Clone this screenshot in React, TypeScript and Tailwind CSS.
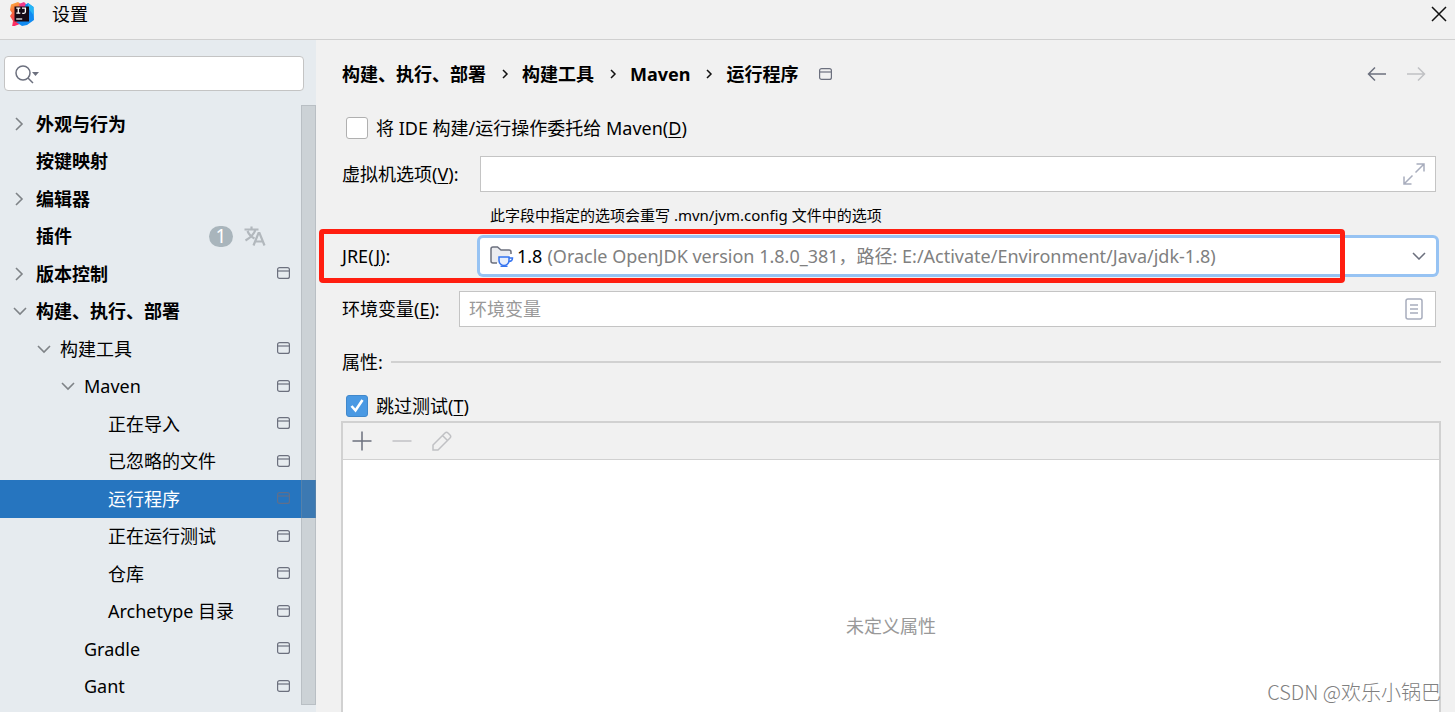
import { useState, type ReactNode } from "react";

const latin = "font-['Noto_Sans','Noto_Sans_CJK_SC',sans-serif]";

type Node = {
  label: string;
  depth: number;
  state?: "open" | "closed";
  bold?: boolean;
  project?: boolean;
  plugin?: boolean;
};

const nodes: Node[] = [
  { label: "外观与行为", depth: 0, state: "closed", bold: true },
  { label: "按键映射", depth: 0, bold: true },
  { label: "编辑器", depth: 0, state: "closed", bold: true },
  { label: "插件", depth: 0, bold: true, plugin: true },
  { label: "版本控制", depth: 0, state: "closed", bold: true, project: true },
  { label: "构建、执行、部署", depth: 0, state: "open", bold: true },
  { label: "构建工具", depth: 1, state: "open", project: true },
  { label: "Maven", depth: 2, state: "open", project: true },
  { label: "正在导入", depth: 3, project: true },
  { label: "已忽略的文件", depth: 3, project: true },
  { label: "运行程序", depth: 3, project: true },
  { label: "正在运行测试", depth: 3, project: true },
  { label: "仓库", depth: 3, project: true },
  { label: "Archetype 目录", depth: 3, project: true },
  { label: "Gradle", depth: 2, project: true },
  { label: "Gant", depth: 2, project: true },
];

const indents = ["pl-3", "pl-9", "pl-[60px]", "pl-[84px]"];

function Logo() {
  return (
    <svg viewBox="0 0 24 24" className="size-6" aria-hidden="true">
      <defs>
        <linearGradient id="warm" x1="0" y1="0" x2="0.3" y2="1">
          <stop offset="0" stopColor="#fdb640" />
          <stop offset="0.45" stopColor="#f9663f" />
          <stop offset="1" stopColor="#fe1f6b" />
        </linearGradient>
      </defs>
      <path d="M1 2.500 8 0l6 4 1 16-13 5 1-6-3-5 2-3-2-3z" fill="url(#warm)" />
      <path d="m9 2 5-2 3 3-6 5z" fill="#f23a8a" />
      <path d="m15 3 3-2 5.500 4 .5 13-7 5-5 1-6-4 12-4z" fill="#118bf2" />
      <path d="m18 1 5.500 4v8l-5.500-7z" fill="#25b5f5" />
      <rect x="4.500" y="4.500" width="14.500" height="15" fill="#160b16" />
      <path d="M6.300 6.200h4M8.300 6.200v5M6.300 11.200h4M12 6.200h3.400v3.600q0 1.500-1.600 1.500h-1.600" stroke="#fff" strokeWidth="1.300" fill="none" />
      <path d="M6.200 17h6" stroke="#fff" strokeWidth="1.200" />
    </svg>
  );
}

function ProjectIcon({ className = "text-[#6c707e]" }: { className?: string }) {
  return (
    <svg viewBox="0 0 13 12" className={`h-3 w-[13px] shrink-0 ${className}`} fill="none" stroke="currentColor" aria-hidden="true">
      <rect x="0.600" y="0.600" width="11.800" height="10.800" rx="2" strokeWidth="1.200" />
      <path d="M1 4h11" strokeWidth="1.200" />
    </svg>
  );
}

function Chevron({ open }: { open: boolean }) {
  return (
    <svg viewBox="0 0 16 16" className="size-4" fill="none" stroke="#7f8387" strokeWidth="1.600" aria-hidden="true">
      <path d={open ? "m2 5 6 6 6-6" : "m4 2 6 6-6 6"} />
    </svg>
  );
}

function TranslateIcon() {
  return (
    <svg viewBox="0 0 22 20" className="h-5 w-[22px]" fill="none" stroke="#b2b8bd" strokeWidth="2.200" aria-hidden="true">
      <path d="M0.500 3.500h14M7.500 0.500v3M11.500 3.500Q9.500 10 1.500 14.500M3.500 5Q5.500 10 10.500 12.500" />
      <path d="m9.500 19.500 5-12.500h1l5 12.500M11.500 15.500h7" />
    </svg>
  );
}

function Mnemonic({ k }: { k: string }) {
  return (
    <span>
      (<span className="underline decoration-1 underline-offset-2">{k}</span>)
    </span>
  );
}

function Check({ label, k, initial }: { label: string; k: string; initial: boolean }) {
  const [on, setOn] = useState(initial);
  return (
    <label className="flex h-6 items-center gap-2 pl-1">
      <span className="grid size-[22px] shrink-0">
        <input
          type="checkbox"
          checked={on}
          onChange={() => setOn(!on)}
          className="col-start-1 row-start-1 appearance-none rounded-[3px] border border-[#b0b0b0] bg-white checked:border-[#4188cb] checked:bg-[#4a99e3]"
        />
        {on && (
          <svg viewBox="0 0 22 22" className="pointer-events-none col-start-1 row-start-1" fill="none" stroke="#fff" strokeWidth="2.600" aria-hidden="true">
            <path d="m5.500 11 4 4.500 7-10.500" />
          </svg>
        )}
      </span>
      <span>
        {label}
        <Mnemonic k={k} />
      </span>
    </label>
  );
}

function TreeRow({ node, selected, onSelect }: { node: Node; selected: boolean; onSelect: () => void }) {
  return (
    <li className="flex flex-1">
      <button
        type="button"
        onClick={onSelect}
        className={`flex flex-1 items-center pr-[26px] text-left ${indents[node.depth]} ${selected ? "bg-[#2675bf] text-white" : ""}`}
      >
        <span className="w-6 shrink-0">{node.state && <Chevron open={node.state === "open"} />}</span>
        <span className={`flex-1 ${node.bold ? "font-bold" : ""}`}>{node.label}</span>
        {node.plugin && (
          <span className="flex items-center gap-[11px] pr-6">
            <span className="flex h-[21px] w-6 items-center justify-center rounded-full bg-[#a9b5bc] text-[19px] text-white">1</span>
            <TranslateIcon />
          </span>
        )}
        {node.project && (
          <span className="pb-px">
            <ProjectIcon className={selected ? "text-[#5f6f8b]" : "text-[#6c707e]"} />
          </span>
        )}
      </button>
    </li>
  );
}

function Sidebar() {
  const [selected, setSelected] = useState("运行程序");
  return (
    <aside className="flex w-[316px] shrink-0 flex-col bg-[#e6ebef]">
      <label className="mx-1 mt-4 mr-3 flex h-[35px] items-center rounded border border-[#c4c4c4] bg-white pl-[9px]">
        <svg viewBox="0 0 26 20" className="h-5 w-[26px]" fill="none" stroke="#6c707e" strokeWidth="1.500" aria-hidden="true">
          <circle cx="9" cy="9" r="7" />
          <path d="m14 14 5 5" />
          <path d="M18 8h7l-3.500 4z" fill="#6c707e" stroke="none" />
        </svg>
        <input type="search" aria-label="搜索" className="min-w-0 flex-1 outline-none" />
      </label>
      <div className="relative mt-[14px] flex">
        <ul className="flex min-h-[600px] flex-1 flex-col">
          {nodes.map((n) => (
            <TreeRow key={n.label} node={n} selected={n.label === selected} onSelect={() => setSelected(n.label)} />
          ))}
        </ul>
        <div className="pointer-events-none absolute inset-y-0 right-0 w-[15px] border border-[#8f969b]/30 bg-[#80868b]/25" />
      </div>
    </aside>
  );
}

function Field({ label, k, id, width, children }: { label: string; k: string; id: string; width: string; children: ReactNode }) {
  return (
    <div className="mr-[5px] flex items-center">
      <label htmlFor={id} className={`shrink-0 ${width}`}>
        {label}
        <Mnemonic k={k} />:
      </label>
      {children}
    </div>
  );
}

function Breadcrumbs() {
  return (
    <div className="flex items-center">
      <nav className="flex flex-1 items-center font-bold">
        {["构建、执行、部署", "构建工具", "Maven", "运行程序"].map((part, i) => (
          <span key={part} className="flex items-center">
            {i > 0 && (
              <svg viewBox="0 0 36 12" className="h-3 w-9" fill="none" stroke="#111" strokeWidth="1.500" aria-hidden="true">
                <path d="m17 2 4 4-4 4" />
              </svg>
            )}
            {part}
          </span>
        ))}
        <span className="pl-[21px]">
          <ProjectIcon />
        </span>
      </nav>
      <div className="flex gap-5 pr-[14px]">
        <button type="button" aria-label="后退" className="text-[#6c707e]">
          <svg viewBox="0 0 20 16" className="h-4 w-5" fill="none" stroke="currentColor" strokeWidth="1.500">
            <path d="M19 8H2M8 1.500 1.500 8 8 14.500" />
          </svg>
        </button>
        <button type="button" aria-label="前进" className="text-[#c0c1c4]">
          <svg viewBox="0 0 20 16" className="h-4 w-5" fill="none" stroke="currentColor" strokeWidth="1.500">
            <path d="M0 8h17M11 1.500 17.500 8 11 14.500" />
          </svg>
        </button>
      </div>
    </div>
  );
}

export default function App() {
  return (
    <div className={`relative flex min-h-screen flex-col bg-[#f1f1f1] text-[18px] leading-6 text-black ${latin}`}>
      <header className="flex h-10 shrink-0 items-start border-b border-[#d0d0d0] pt-[2px] pr-2 pl-[10px]">
        <Logo />
        <h1 className="flex-1 pl-[18px]">设置</h1>
        <button type="button" aria-label="关闭" className="pt-1">
          <svg viewBox="0 0 16 16" className="size-4" fill="none" stroke="#111" strokeWidth="1.500">
            <path d="m1 1 14 14M15 1 1 15" />
          </svg>
        </button>
      </header>
      <div className="flex flex-1">
        <Sidebar />
        <main className="flex min-w-0 flex-1 flex-col pt-[22px] pr-[14px] pl-[26px]">
          <Breadcrumbs />
          <div className="mt-[30px]">
            <Check label="将 IDE 构建/运行操作委托给 Maven" k="D" initial={false} />
          </div>
          <div className="mt-4">
            <Field label="虚拟机选项" k="V" id="vm" width="w-[138px]">
              <div className="flex h-9 flex-1 items-center border border-[#c4c4c4] bg-white pr-[10px] pl-2">
                <input id="vm" type="text" className="min-w-0 flex-1 outline-none" />
                <svg viewBox="0 0 22 22" className="size-[22px]" fill="none" stroke="#a8adbd" strokeWidth="1.500" aria-hidden="true">
                  <path d="M13.500 1H21v7.500M21 1l-8.500 8.500M1 13.500V21h7.500M1 21l8.500-8.500" />
                </svg>
              </div>
            </Field>
          </div>
          <p className="mt-[11px] pl-[148px] text-[15px]">此字段中指定的选项会重写 .mvn/jvm.config 文件中的选项</p>
          <div className="relative mt-[11px]">
            <Field label="JRE" k="J" id="jre" width="w-[138px]">
              <div className="flex h-9 min-w-0 flex-1 items-center rounded-[3px] bg-white pr-[10px] pl-[10px] ring-[3px] ring-[#97c3f3]">
                <svg viewBox="0 0 24 22" className="h-[22px] w-6 shrink-0" fill="none" strokeWidth="1.500" aria-hidden="true">
                  <path d="M7 18H3q-2 0-2-2V4q0-2 2-2h4.500l3.500 3h8q2 0 2 2v2" fill="#ebecf0" stroke="#6c707e" />
                  <path d="M9 12h10v3.500a5 5 0 0 1-10 0z" fill="#e7effd" stroke="#3574f0" />
                  <path d="M19 13h3.500q0 3.500-4 3.500M10.500 21.200h7" stroke="#3574f0" />
                </svg>
                <span className="pl-[3px]">1.8</span>
                <select id="jre" className="min-w-0 flex-1 appearance-none bg-transparent pl-[5px] text-[#808080] outline-none">
                  <option>(Oracle OpenJDK version 1.8.0_381，路径: E:/Activate/Environment/Java/jdk-1.8)</option>
                </select>
                <svg viewBox="0 0 14 8" className="h-2 w-[14px] shrink-0" fill="none" stroke="#6c707e" strokeWidth="1.500" aria-hidden="true">
                  <path d="m1 1 6 6 6-6" />
                </svg>
              </div>
            </Field>
            <div className="pointer-events-none absolute -inset-y-[9px] right-[96px] -left-[23px] rounded border-[5px] border-[#ff1e10]" />
          </div>
          <div className="mt-[17px]">
            <Field label="环境变量" k="E" id="env" width="w-[117px]">
              <div className="flex h-9 flex-1 items-center border border-[#c4c4c4] bg-white pr-3 pl-[9px]">
                <input id="env" type="text" placeholder="环境变量" className="min-w-0 flex-1 outline-none placeholder:text-[#999999]" />
                <svg viewBox="0 0 18 22" className="h-[22px] w-[18px]" fill="none" stroke="#a8adbd" strokeWidth="1.500" aria-hidden="true">
                  <rect x="1" y="1" width="16" height="20" rx="2" />
                  <path d="M5 7h8M5 11h8M5 15h8" />
                </svg>
              </div>
            </Field>
          </div>
          <div className="mt-[23px] flex items-center gap-2">
            <h2>属性:</h2>
            <div className="h-[2px] flex-1 bg-[#d1d1d1]" />
          </div>
          <div className="mt-5">
            <Check label="跳过测试" k="T" initial={true} />
          </div>
          <section className="mt-[3px] -ml-px flex flex-1 flex-col border-2 border-b-0 border-[#d1d1d1] bg-white">
            <div className="flex h-[37px] shrink-0 items-center gap-5 border-b border-[#d1d1d1] bg-[#f1f1f1] pl-[9px]">
              <button type="button" aria-label="添加" className="text-[#6c707e]">
                <svg viewBox="0 0 20 20" className="size-5" fill="none" stroke="currentColor" strokeWidth="1.500">
                  <path d="M0.500 10h19M10 0.500v19" />
                </svg>
              </button>
              <button type="button" aria-label="移除" className="text-[#c0c1c4]">
                <svg viewBox="0 0 20 20" className="size-5" fill="none" stroke="currentColor" strokeWidth="1.500">
                  <path d="M0.500 10h19" />
                </svg>
              </button>
              <button type="button" aria-label="编辑" className="text-[#c0c1c4]">
                <svg viewBox="0 0 20 20" className="size-5" fill="none" stroke="currentColor" strokeWidth="1.500">
                  <path d="M1 19v-5L13 2q1.500-1.500 3 0l2 2q1.500 1.500 0 3L6 19zM10.500 4.500l5 5" />
                </svg>
              </button>
            </div>
            <p className="pt-[154px] text-center text-[#999999]">未定义属性</p>
          </section>
        </main>
      </div>
      <div className="pointer-events-none absolute right-[14px] bottom-2 font-['Noto_Sans_CJK_SC',sans-serif] text-[20px] font-light text-[#808080]">
        CSDN @欢乐小锅巴
      </div>
    </div>
  );
}
